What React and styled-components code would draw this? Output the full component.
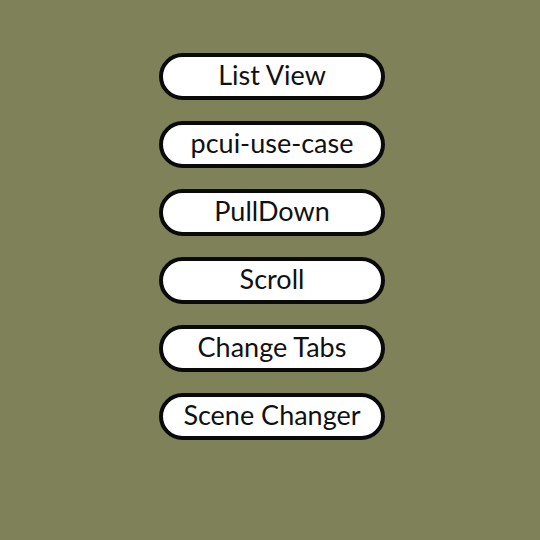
import React from "react";
import styled, { createGlobalStyle } from "styled-components";

const Global = createGlobalStyle`
  html, body { margin: 0; padding: 0; background: #7f8259; }
  body { font-family: "Lato", "Noto Sans", sans-serif; }
`;

const Page = styled.div`
  width: 540px;
  height: 540px;
  background: #7f8259;
  display: flex;
  flex-direction: column;
  align-items: center;
  padding-top: 53px;
  padding-left: 4px;
  box-sizing: border-box;
  gap: 21px;
`;

const Button = styled.button`
  width: 226px;
  height: 47px;
  box-sizing: border-box;
  border: 4px solid #0a0a0a;
  border-radius: 24px;
  background: #ffffff;
  color: #111;
  font-family: "Lato", "Noto Sans", sans-serif;
  font-size: 27px;
  line-height: 1;
  padding: 0 0 4px;
  display: flex;
  align-items: center;
  justify-content: center;
  cursor: pointer;
`;

const items = ["List View", "pcui-use-case", "PullDown", "Scroll", "Change Tabs", "Scene Changer"];

export default function App() {
  return (
    <>
      <Global />
      <Page>
        {items.map((t) => (
          <Button key={t}>{t}</Button>
        ))}
      </Page>
    </>
  );
}
